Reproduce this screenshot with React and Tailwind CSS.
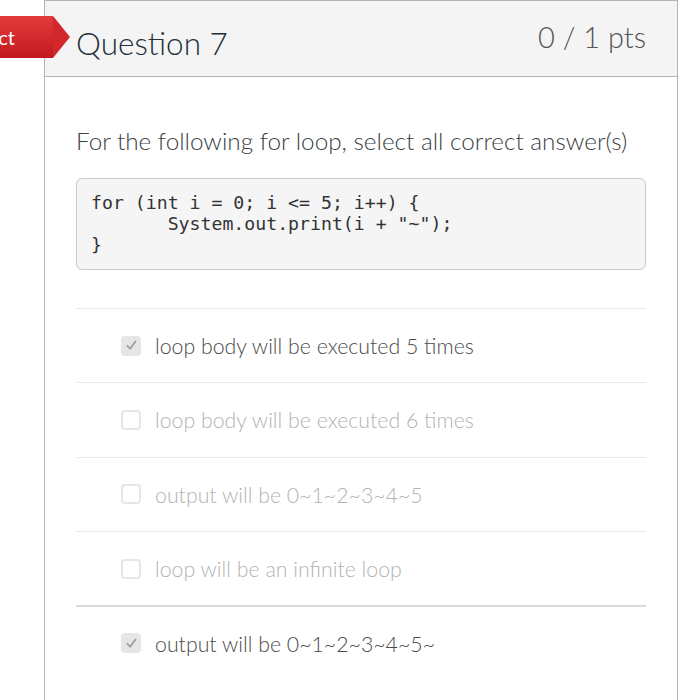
import React from "react";

const answers = [
  { text: "loop body will be executed 5 times", checked: true },
  { text: "loop body will be executed 6 times", checked: false },
  { text: "output will be 0~1~2~3~4~5", checked: false },
  { text: "loop will be an infinite loop", checked: false },
  { text: "output will be 0~1~2~3~4~5~", checked: true },
];

const Check = ({ checked }) =>
  checked ? (
    <span className="flex h-[20px] w-[20px] shrink-0 items-center justify-center rounded-[4px] bg-[#e6e6e6]">
      <svg width="13" height="13" viewBox="0 0 14 14" fill="none">
        <path d="M2.5 7.5 L5.5 10.5 L11.5 2.5" stroke="#9a9a9a" strokeWidth="1.8" strokeLinecap="round" strokeLinejoin="round" />
      </svg>
    </span>
  ) : (
    <span className="h-[20px] w-[20px] shrink-0 rounded-[4px] border-2 border-[#e6e6e6] bg-white" />
  );

const App = () => {
  return (
    <div className="relative h-[700px] w-[679px] overflow-hidden bg-white font-['Lato',sans-serif]">
      {/* result badge, cut off at the left edge */}
      <div className="absolute left-0 top-[16px] z-10 flex h-[42px] items-center">
        <div className="flex h-full w-[53px] items-center justify-end overflow-hidden whitespace-nowrap bg-gradient-to-b from-[#e23a3d] to-[#c2181d] pr-[38px] text-[20px] text-white">
          Incorrect
        </div>
        <div className="h-0 w-0 border-y-[21px] border-l-[17px] border-y-transparent border-l-[#d2282c]" />
      </div>

      <div className="ml-[44px] mr-[1px] h-full border-x border-t border-[#b3b3b3]">
        <div className="flex h-[76px] items-start justify-between border-b border-[#b3b3b3] bg-[#f4f4f4] px-[31px] pt-[21px]">
          <h1 className="text-[31.5px] font-light leading-[42px] text-[#22303a]">Question 7</h1>
          <div className="text-[29px] font-light leading-[30px] text-[#555]">0 / 1 pts</div>
        </div>

        <div className="px-[31px] pt-[49px]">
          <p className="text-[24.3px] font-light leading-[30px] text-[#3a3f44]">
            For the following for loop, select all correct answer(s)
          </p>
          <pre className="mt-[22px] h-[92px] rounded-[6px] border border-[#c9c9c9] bg-[#f5f5f5] px-[14px] pt-[13px] font-['DejaVu_Sans_Mono',monospace] text-[18.2px] leading-[21px] text-[#333]">
{`for (int i = 0; i <= 5; i++) {
       System.out.print(i + "~");
}`}
          </pre>

          <div className="mt-[38px]">
            {answers.map((a, i) => (
              <div
                key={i}
                className={`flex h-[74.3px] items-center gap-[14px] border-t pl-[45px] ${
                  i === 4 ? "border-t-2 border-[#d9d9d9]" : "border-[#e8e8e8]"
                }`}
              >
                <Check checked={a.checked} />
                <span className={`pt-[3px] text-[21.3px] font-light ${a.checked ? "text-[#4a4a4a]" : "text-[#b3b3b3]"}`}>
                  {a.text}
                </span>
              </div>
            ))}
          </div>
        </div>
      </div>
    </div>
  );
};

export default App;
